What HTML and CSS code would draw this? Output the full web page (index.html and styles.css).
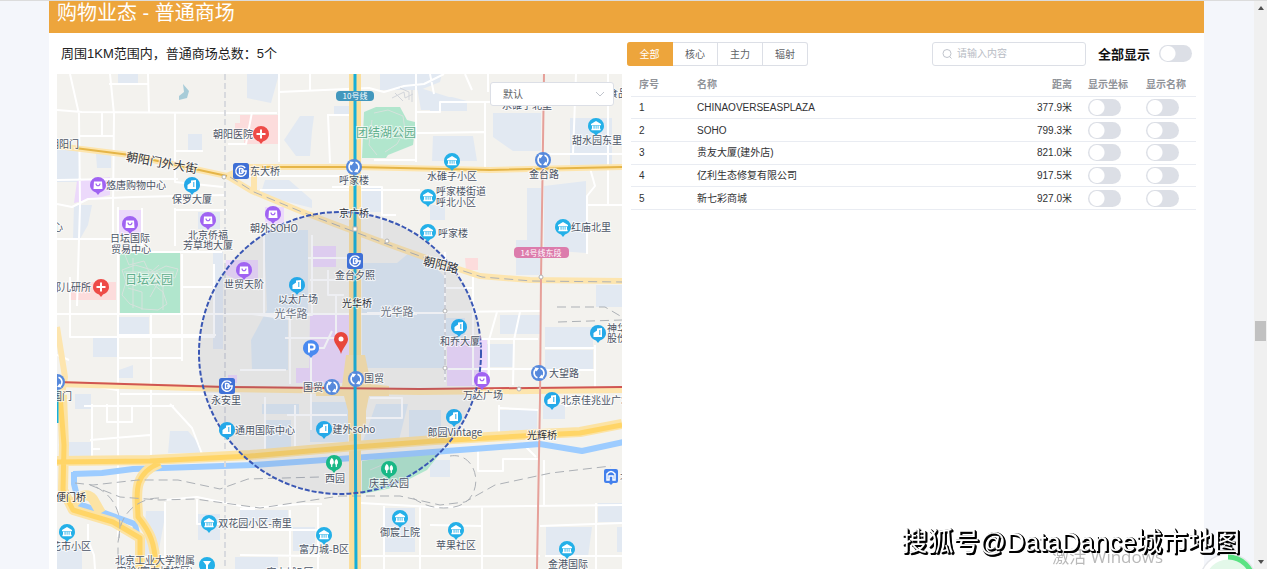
FILE: index.html
```html
<!DOCTYPE html>
<html lang="zh-CN">
<head>
<meta charset="utf-8">
<title>购物业态 - 普通商场</title>
<link rel="stylesheet" href="styles.css">
</head>
<body>
<div class="page">
<main class="card">
  <h1 class="title">购物业态 - 普通商场</h1>
  <div class="columns">
    <section class="left">
      <p class="summary">周围1KM范围内，普通商场总数：5个</p>
      <div class="map">
        <svg class="map-canvas" viewBox="57 74 565 495" preserveAspectRatio="xMidYMin slice" role="img" aria-label="周边商场地图">
          <defs>
            <g id="drop"><path d="M-8 0a8 8 0 1 1 16 0c0 4-3 6.500-6 7.500L0 10l-2-2.500C-5 6.500-8 4-8 0z"/></g>
            <g id="home"><use href="#drop" fill="#24b0e8"/><path fill="#fff" d="M0-5l5 3v1.200H-5V-2zM-4-.300h1.600V3H-4zM-1.500-.300H-.300V3h-1.200zM.500-.300h1.200V3H.500zM2.500-.300H4V3H2.500zM-4.600 2.800h9.200v1.400h-9.200z"/></g>
            <g id="tower"><use href="#drop" fill="#24a8e8"/><path fill="#fff" d="M-4.500 0L-1-2.500V4h-3.500zM-1-4.500l5-.500v9h-5z"/><path stroke="#24a8e8" d="M1.800-3v5"/></g>
            <g id="bag"><use href="#drop" fill="#a063f2"/><path fill="#fff" d="M-4-3.500h8l.500 7.500h-9z"/><path fill="none" stroke="#a063f2" stroke-width="1.200" d="M-2-1.500c.200 3 3.800 3 4 0"/></g>
            <g id="cross"><use href="#drop" fill="#ee4b48"/><path stroke="#fff" stroke-width="2" d="M-4.500 0h9M0-4.500v9"/></g>
            <g id="tree"><use href="#drop" fill="#18b886"/><path fill="#fff" d="M-2.300-5c3 2 2.500 6.500.600 6.500V4h-1.200V1.500C-4.800 1-4.500-3-2.300-5zM2.300-4c2.500 1.500 2 5.500.600 5.500V4H1.700V1.500C0 1 .500-3 2.300-4z"/></g>
            <g id="ring"><circle r="8" fill="#5689dc"/><path fill="none" stroke="#fff" stroke-width="1.600" d="M-1.500 4.700A5 5 0 0 1-3-4M1.500-4.700A5 5 0 0 1 3 4"/><path fill="#fff" d="M-4.500-5.500L0-5-2.500-1.500zM4.500 5.500L0 5l2.500-3.500z"/></g>
            <g id="metro"><rect x="-8" y="-8" width="16" height="16" rx="2.500" fill="#3f70d6"/><path fill="none" stroke="#fff" stroke-width="1.400" d="M4.200-3A5.200 5.200 0 1 0 5.200 0H0M-1.500-2.500v5H0c3 0 3-5 0-5z"/></g>
          </defs>
          <rect class="land" x="57" y="74" width="565" height="495"/>
          <path class="block" d="M118 74h20v9h-20zM188 134h14v16h-14zM96 154h15v14H97zM57 150h22v32H57zM74 205h18l-4 20-8 14H73zM198 212h22v17h-22zM119 317h30v18h-30zM93 338h24v19H93zM119 370l14-5v13h-14zM180 375h0zM170 431h18l12 14v8h-32zM67 442h25v16H67zM75 394h16v15H75zM247 74h32l-8 29-24-5zM300 116h14l-2 15-2 25h-14l-12-16zM334 106h15v9h-15zM362 188h20v24h-20zM380 74h62l-2 8-20 8h-40zM417 87l32 10v13h-28zM430 97l22 0 15 4v10h-37zM493 113h48v38h-28l-20-14zM433 136h40l4 25h-45zM570 118h42v50h-42zM527 188h14v75h-14zM544 186l42-5v72l-42-3zM430 205h15v15h-15zM516 240h25v35h-25zM596 285h26v22h-26zM545 327h48v20h-48zM545 350h48v20h-48zM480 344h34v23h-34zM500 315h40v19h-40zM146 511h20l-10 55h-14zM198 514h22v26h-22zM240 510h48v12h-48zM293 527h22v24h-22zM57 548h25v21H57zM383 508h32v44h-32zM430 460h20v17h-20zM499 410h38v24h-38zM543 405h22v14h-22zM546 527h46l-4 30h-42zM598 503h24v19h-24zM617 527h5v25h-5zM120 555h24v14h-24zM235 557h43v12h-43zM213 252h10v97h-10zM265 180l24 0 23 20 0 8-32-8-20-4z"/>
          <path class="block dense" d="M265 230h43v85h-20v55h-36l-1-30 16-30-2-50h0zM310 402h38v40h-38zM262 404h37v10h-37zM264 420h27v30h-27zM362 263h35l12-10h12l24 24v91h-83zM376 404h32l-10 40h-36zM409 410h32v28h-32zM445 318h20v20h-20z"/>
          <path class="mall" d="M77 181l33-4v18l-36 8zM118 210h24v25h-24zM265 207h19v18h-19zM226 260h32v20h-20l-14-6zM311 246h25v21h-25zM310 315h40v35l-4 33h-37zM296 368h15v15h-15zM447 340h40v46h-40zM228 375h9v8h-9z"/>
          <path class="clinic" d="M240 115h39v29h-35v-8h-9v-13h5zM80 282h36v18H70v-8h10zM465 258h13v12h-12z"/>
          <path class="park" d="M120 251h60v62h-60zM364 112l12-5h24l7 13 8 2v8l-2 15-25 10-2 3h-24zM362 461l40-6 40-4-15 19-35 18-30 6z"/>
          <path class="road" d="M70 74l9 40 1 92-3 100M110 74l4 40-1 94v45M57 110l25 2 145 1h50M148 74l1 38M109 84h40M102 112v23M79 136h34M175 112v70l48 5M175 151h28M228 144h18l6-32M279 74v88M279 92l90-4 15 4 20-6 20-2 20-10M310 74v16M327 115h22M328 115l2 48M416 74v38h24v-10h54l50-2M416 133h30M416 112v50M374 160h42M240 176h120M260 190h160M332 187h50v28h14M488 92v-18M485 103v65M430 133l54-1M576 74l-3 80M543 154h80M608 74v80M590 168l5 18-8 10v58M587 205h35M465 74l7 16M57 239h61M57 204l15 3 16-8 45-2 92-2M118 207v330M142 208v38M175 208v38M175 210h52M57 180l60-1h61M114 252h108M214 264v73H70v-60M57 314h360M182 254v107M119 358h62M118 335h98M182 287h30M151 315v140M57 380l60 10v-5M84 406h90M92 404v58M107 404v18h25v-17M118 422h14M170 404l22 24 10 26M120 394h120M264 230v85h48v-80M308 258h40M310 280h35M328 270v25h16M336 296v42M252 314l38 5v65M285 338h62M240 370h46M311 345v85M311 348h13l8-17M265 397v55M295 405v45M287 415h60M370 398h32v20h-42M367 313h80M382 238v-20M445 252v130M445 312l95-1M473 277v108M497 312l-8 28v40M520 312l-6 28-1 45M473 339h65M448 369h92M445 288h28M500 408l38 2M499 405v35M478 451v20h25v-12h35M522 443l14 14M544 460v47M545 348h49M595 345v56M545 370h50M600 400l-35 6M240 509l62-5h20M290 510v59M318 507v62M240 530h82M240 555l80 1M360 503l72 4 190-2M420 506v63M430 525l52 1v-18M482 507v62M360 556l180 0M596 503v66M540 526l82-3M545 556h77M384 506v63M88 524v16l6 15 1 14M165 502v55h-24M165 500l32-3 58 12M197 499v25h25M92 449h8M430 74l4 20M608 154v52M57 355l12 5M90 440l60-5"/>
          <path class="park-path" d="M125 255l4 10 15-4 6 13 16-8 12 3-3 9-16-3-5 10 9 7 4 12-9 6-15-1-13-5-8-9 4-13-4-12 13-5 17 5 7 11-9 16M150 273l9-8M128 288l14 4 0 18M124 272h50M133 258v50M163 280v30M374 113l14-3 15 6 2 14-8 14-12 8M372 120l-3 25 8 10M370 470l12-5 3 15M395 462l-8 22"/>
          <path class="water" d="M73 474l29-1 31-4 120-4 100-7 80-6 107-8 42 7 42-9"/>
          <path class="water" d="M74 472v12l5 20 34 12 22 8 9 45"/>
          <path class="rail-soft" d="M225 74v495M445 260v120"/>
          <g class="pale">
            <path d="M57 146l73 9 97 21 20-9h108l135 3 132-3"/>
            <path d="M227 176l25 15 48 20 90 34 50 18 40 13 50 4 92 1M254 170v23"/>
            <path d="M57 384l168 5 195 3 202-2"/>
            <path d="M57 327l8 50-5 30"/>
          </g>
          <path class="pale-wide" d="M355 74v495"/>
          <path class="pale-fill" d="M346 355h19l6 29 18 2v10h-20l-3 15v20h-18v-20l-4-15h-28v-10h26z"/>
          <path class="highway-edge" d="M62 395l2 50-1 45 10 20 40 12 27 16 0 31M57 461l93-1 100-5 105-9 80-6 105-6 40-2 42-8M160 463c-30 12-22 35-22 54 12 15 17 25 18 52M71 507c8-12 16-15 22-8l8 14"/>
          <path class="highway" d="M60 395l4 50-1 45 10 20 40 12 27 16 0 31M57 462l93-1 100-5 105-9 80-6 105-6 40-2 42-8M160 463c-30 12-22 35-22 54 12 15 17 25 18 52"/>
          <path class="rail" d="M75 483l18 2 45-5h40l42 9 28-10 72-2M90 485l30 12 40 3 35-1 65 9 80-12 60 0 40 9 25-3 30-17 56-12 60-7M96 487c20 10 28 30 22 55v27M159 498c-20 0-40 15-40 40M450 456c30-5 37 45 4 51-15 3-30-1-41-9M557 307h48l17 10M558 322l64-2"/>
          <path class="rail" d="M230 177l24 15 48 20 90 34 50 18 40 13 50 4 90 1"/>
          <path class="avenue" d="M75 148l55 7 97 21M262 167h93l135 3 132-3"/>
          <path class="red-line" d="M57 382l168 5 195 2 202-2"/>
          <path class="pink-line" d="M544 74l-3 205-1 120-3 170"/>
          <path class="blue-line" d="M355 74v290l1 205M57 390v33"/>
          <path fill="#a8ccd8" d="M183 84l6 7-2 7-8 2 0-4 5-4z"/>
          <path class="outline" d="M392 98l12-6 1 6 8-4M400 88l9 4v8M412 90v12M395 93l8 8"/>
          <circle class="radius" cx="340" cy="353" r="141"/>
          <g class="stop"><circle cx="224" cy="177" r="2"/><circle cx="541" cy="277" r="2"/><circle cx="445" cy="311" r="2"/><circle cx="445" cy="368" r="2"/><circle cx="519" cy="389" r="2"/><circle cx="387" cy="241" r="2"/><rect x="353" y="227" width="4" height="4"/></g>
          <rect x="336" y="91" width="38" height="10" rx="4" fill="#4297bd"/>
          <rect x="514" y="247" width="55" height="11" rx="4" fill="#dc7cac"/>
          <g class="line-name"><text x="355" y="99">10号线</text><text x="541" y="256">14号线东段</text></g>
          <g class="poi">
            <text x="233" y="138">朝阳医院</text><text x="64" y="148">朝阳门</text><text x="136" y="189">悠唐购物中心</text><text x="192" y="203">保罗大厦</text>
            <text x="130" y="242">日坛国际</text><text x="131" y="253">贸易中心</text><text x="208" y="239">北京侨福</text><text x="208" y="249">芳草地大厦</text>
            <text x="274" y="232">朝外SOHO</text><text x="265" y="175">东大桥</text><text x="354" y="184">呼家楼</text><text x="452" y="180">水碓子小区</text>
            <text x="461" y="195">呼家楼街道</text><text x="456" y="206">呼北小区</text><text x="453" y="237">呼家楼</text><text x="544" y="178">金台路</text>
            <text x="527" y="109">水碓子北里</text><text x="597" y="144">甜水园东里</text><text x="591" y="231">红庙北里</text><text x="618" y="97">食品</text>
            <text x="355" y="279">金台夕照</text><text x="244" y="288">世贸天阶</text><text x="298" y="303">以太广场</text><text x="71" y="291">都儿研所</text>
            <text x="460" y="345">和乔大厦</text><text x="617" y="332">神华</text><text x="617" y="342">股份</text><text x="564" y="377">大望路</text><text x="374" y="382">国贸</text><text x="313" y="391">国贸</text>
            <text x="483" y="399">万达广场</text><text x="596" y="404">北京佳兆业广场</text><text x="226" y="404">永安里</text><text x="57" y="400">建国门</text><text x="265" y="434">通用国际中心</text>
            <text x="354" y="433">建外soho</text><text x="455" y="436">郎园Vintage</text><text x="335" y="482">西园</text><text x="389" y="487">庆丰公园</text>
            <text x="255" y="527">双花园小区-南里</text><text x="324" y="553">富力城-B区</text><text x="400" y="536">御宸上院</text><text x="456" y="549">苹果社区</text><text x="568" y="568">金港国际</text>
            <text x="71" y="550">花市小区</text><text x="155" y="564">北京工业大学附属</text><text x="155" y="575">实验(富力城校区)</text><text x="630" y="480">北京</text><text x="290" y="576">富力城D区</text><text x="53" y="231">中心</text>
          </g>
          <g>
            <use href="#home" x="596" y="126"/><use href="#home" x="452" y="161"/><use href="#home" x="428" y="197"/><use href="#home" x="428" y="232"/><use href="#home" x="563" y="227"/><use href="#home" x="67" y="532"/><use href="#home" x="209" y="523"/><use href="#home" x="324" y="535"/><use href="#home" x="400" y="518"/><use href="#home" x="456" y="530"/><use href="#home" x="567" y="549"/>
            <use href="#tower" x="192" y="185"/><use href="#tower" x="297" y="285"/><use href="#tower" x="459" y="327"/><use href="#tower" x="598" y="333"/><use href="#tower" x="552" y="400"/><use href="#tower" x="227" y="430"/><use href="#tower" x="324" y="429"/><use href="#tower" x="454" y="417"/>
            <use href="#bag" x="98" y="185"/><use href="#bag" x="130" y="224"/><use href="#bag" x="208" y="220"/><use href="#bag" x="273" y="214"/><use href="#bag" x="244" y="270"/><use href="#bag" x="482" y="380"/>
            <use href="#cross" x="261" y="134"/><use href="#cross" x="101" y="287"/>
            <use href="#tree" x="334" y="463"/><use href="#tree" x="389" y="469"/>
            <use href="#ring" x="354" y="167"/><use href="#ring" x="543" y="160"/><use href="#ring" x="332" y="387"/><use href="#ring" x="356" y="379"/><use href="#ring" x="539" y="373"/><use href="#ring" x="57" y="382"/>
            <use href="#metro" x="241" y="171"/><use href="#metro" x="355" y="261"/><use href="#metro" x="227" y="386"/>
            <g transform="translate(207 565)"><use href="#drop" fill="#24b0e8"/><path fill="#fff" d="M-4-4h8L1 0v4h-2V0z"/></g>
            <g transform="translate(311 348)"><use href="#drop" fill="#4a8af0"/><path fill="none" stroke="#fff" stroke-width="2" d="M-2 4.500v-8H1c3.500 0 3.500 5 0 5h-3"/></g>
            <g transform="translate(611 476)"><path fill="#4380ec" d="M-5-7H5q2 0 2 2V5q0 2-2 2H2L0 9-2 7h-3q-2 0-2-2V-5q0-2 2-2z"/><path fill="none" stroke="#fff" stroke-width="1.500" d="M-4 4v-6q4-5 8 0v6H2V0h-4v4z"/></g>
            <g transform="translate(341 341)"><path fill="#e8463c" d="M0 13C-2 6-7 3-7-2a7 7 0 0 1 14 0c0 5-5 8-7 15z"/><circle cy="-2" r="2.500" fill="#fff"/></g>
          </g>
          <g class="area"><text x="291" y="318">光华路</text><text x="397" y="316">光华路</text></g>
          <g class="bridge"><text x="354" y="217">京广桥</text><text x="357" y="307">光华桥</text><text x="542" y="439">光辉桥</text><text x="66" y="501">东便门桥</text></g>
          <g class="street"><text transform="translate(161 167) rotate(10)">朝阳门外大街</text><text transform="translate(440 269) rotate(14)">朝阳路</text></g>
          <g class="park-name"><text x="386" y="137">团结湖公园</text><text x="149" y="284">日坛公园</text></g>
        </svg>
        <div class="map-select">
          <select aria-label="地图样式"><option>默认</option></select>
          <svg viewBox="0 0 10 6" aria-hidden="true"><path d="M1 1l4 4 4-4"/></svg>
        </div>
      </div>
    </section>
    <section class="right">
      <div class="toolbar">
        <div class="tabs">
          <button type="button" class="tab active">全部</button><button type="button" class="tab">核心</button><button type="button" class="tab">主力</button><button type="button" class="tab">辐射</button>
        </div>
        <label class="search">
          <svg viewBox="0 0 12 12" aria-hidden="true"><circle cx="6" cy="5.500" r="4"/><path d="M8.500 8.500l2 2"/></svg>
          <input type="text" placeholder="请输入内容" aria-label="搜索">
        </label>
        <label class="show-all">全部显示<input type="checkbox" class="switch"></label>
      </div>
      <table class="list">
        <thead><tr><th class="no">序号</th><th>名称</th><th class="distance">距离</th><th class="toggle">显示坐标</th><th class="toggle">显示名称</th></tr></thead>
        <tbody>
          <tr><td>1</td><td>CHINAOVERSEASPLAZA</td><td class="distance">377.9米</td><td class="toggle"><input type="checkbox" class="switch" aria-label="显示坐标 1"></td><td class="toggle"><input type="checkbox" class="switch" aria-label="显示名称 1"></td></tr>
          <tr><td>2</td><td>SOHO</td><td class="distance">799.3米</td><td class="toggle"><input type="checkbox" class="switch" aria-label="显示坐标 2"></td><td class="toggle"><input type="checkbox" class="switch" aria-label="显示名称 2"></td></tr>
          <tr><td>3</td><td>贵友大厦(建外店)</td><td class="distance">821.0米</td><td class="toggle"><input type="checkbox" class="switch" aria-label="显示坐标 3"></td><td class="toggle"><input type="checkbox" class="switch" aria-label="显示名称 3"></td></tr>
          <tr><td>4</td><td>亿利生态修复有限公司</td><td class="distance">917.5米</td><td class="toggle"><input type="checkbox" class="switch" aria-label="显示坐标 4"></td><td class="toggle"><input type="checkbox" class="switch" aria-label="显示名称 4"></td></tr>
          <tr><td>5</td><td>新七彩商城</td><td class="distance">927.0米</td><td class="toggle"><input type="checkbox" class="switch" aria-label="显示坐标 5"></td><td class="toggle"><input type="checkbox" class="switch" aria-label="显示名称 5"></td></tr>
        </tbody>
      </table>
    </section>
  </div>
</main>
<div class="scrollbar" aria-hidden="true">
  <svg viewBox="0 0 6 4"><path d="M0 4l3-4 3 4z"/></svg>
  <span class="thumb"></span>
  <svg viewBox="0 0 6 4"><path d="M0 0l3 4 3-4z"/></svg>
</div>
</div>
<div class="activate">激活 Windows</div>
<svg class="gauge" viewBox="0 0 60 16" aria-hidden="true"><circle cx="30" cy="29" r="29" fill="#e4e6ea"/><circle cx="30" cy="29" r="25" fill="#e3f8e9" stroke="#fff" stroke-width="5"/><path d="M30 4a25 25 0 0 1 25 25" fill="none" stroke="#5ae383" stroke-width="5"/></svg>
<div class="watermark">搜狐号@DataDance城市地图</div>
</body>
</html>
```
FILE: styles.css
```css
* { box-sizing: border-box; }

body {
  margin: 0;
  height: 100vh;
  overflow: hidden;
  background: #f4f6fb;
  color: #303133;
  font-family: "Liberation Sans", "Noto Sans CJK SC", sans-serif;
  font-size: 10px;
}

.page { display: flex; height: 100%; border-top: 1px solid #dcdcdc; }

.card {
  flex: 1;
  display: flex;
  flex-direction: column;
  margin: 0 50px 0 49px;
  background: #fff;
}

.title {
  margin: 0;
  height: 32px;
  padding: 0 8px;
  background: #eda53c;
  color: #fff;
  font-size: 20px;
  font-weight: 400;
  line-height: 24px;
}

.columns {
  flex: 1;
  display: grid;
  grid-template-columns: 565fr 569fr;
  gap: 5px;
  padding: 0 8px;
  min-height: 0;
}

.left { display: flex; flex-direction: column; min-height: 0; }
.summary { margin: 0; padding: 0 4px; color: #222; font-size: 13px; line-height: 41px; height: 41px; }
.map { position: relative; flex: 1; min-height: 0; overflow: hidden; }
.map-canvas { display: block; width: 100%; height: 100%; font-family: "Noto Sans CJK SC", sans-serif; }

.map-select { position: absolute; top: 8px; right: 8px; width: 124px; }
.map-select select {
  appearance: none;
  display: block;
  width: 100%;
  height: 24px;
  padding: 0 12px;
  border: 1px solid #dcdfe6;
  border-radius: 3px;
  background: #fff;
  color: #606266;
  font: inherit;
}
.map-select svg { position: absolute; right: 9px; top: 9px; width: 10px; height: 6px; fill: none; stroke: #c0c4cc; pointer-events: none; }

.land { fill: #f3f2ee; }
.block { fill: #e2e9f2; }
.dense { fill: #dee9f3; }
.mall { fill: #ecd9fb; }
.clinic { fill: #fcdcdc; }
.park { fill: #b1e6cd; }
.road { fill: none; stroke: #fff; stroke-width: 2; stroke-linejoin: round; }
.park-path { fill: none; stroke: #d5e2dc; stroke-width: 1; }
.water { fill: none; stroke: #9dccff; stroke-width: 6; stroke-linejoin: round; }
.rail-soft { fill: none; stroke: #d8dade; stroke-width: 2; stroke-dasharray: 6 3; }
.rail { fill: none; stroke: #adb1b6; stroke-width: 1; stroke-dasharray: 9 5; }
.pale { fill: none; stroke: #fde5ae; stroke-width: 6; }
.pale-wide { fill: none; stroke: #fbdf9d; stroke-width: 12; }
.pale-fill { fill: #fbe3ac; }
.avenue { fill: none; stroke: #e5b548; stroke-width: 2; }
.highway-edge { fill: none; stroke: #fce3a4; stroke-width: 10; stroke-linejoin: round; }
.highway { fill: none; stroke: #ffd567; stroke-width: 5; stroke-linejoin: round; }
.red-line { fill: none; stroke: #d05652; stroke-width: 2; }
.pink-line { fill: none; stroke: #e6a099; stroke-width: 2; }
.blue-line { fill: none; stroke: #16afd9; stroke-width: 3; }
.outline { fill: none; stroke: #d2d5da; stroke-width: 1; }
.radius { fill: #5a648c; fill-opacity: .1; stroke: #3a57b4; stroke-width: 2; stroke-dasharray: 5 2; }
.stop { fill: #fff; stroke: #b4b4b4; stroke-width: 1; }

.poi, .area, .bridge, .street, .park-name, .line-name { text-anchor: middle; paint-order: stroke; stroke: #fff; stroke-opacity: .7; stroke-width: 2; }
.poi { fill: #4c5566; font-size: 10px; }
.area { fill: #6b7280; font-size: 11px; }
.bridge { fill: #2e323a; font-size: 10px; }
.street { fill: #30343c; font-size: 12px; }
.park-name { fill: #5fae8c; font-size: 12px; }
.line-name { fill: #fff; stroke: none; font-size: 8px; }

.toolbar { display: flex; align-items: center; height: 41px; padding-right: 4px; }
.tabs { display: flex; margin-right: auto; }
.tab {
  width: 45px;
  height: 24px;
  padding: 0;
  border: 1px solid #dcdfe6;
  border-left-width: 0;
  background: #fff;
  color: #606266;
  font: inherit;
}
.tab:last-child { border-radius: 0 3px 3px 0; }
.tab.active { width: 46px; border-color: #eda53c; border-radius: 3px 0 0 3px; background: #eda53c; color: #fff; }

.search {
  display: flex;
  align-items: center;
  gap: 4px;
  width: 154px;
  height: 24px;
  padding: 0 8px;
  border: 1px solid #dcdfe6;
  border-radius: 3px;
}
.search svg { flex: none; width: 12px; height: 12px; fill: none; stroke: #c0c4cc; }
.search input { flex: 1; min-width: 0; padding: 0; border: 0; outline: 0; background: none; font: inherit; }
.search input::placeholder { color: #b8bcc4; }

.show-all { display: flex; align-items: center; gap: 9px; margin-left: 12px; color: #111; font-size: 13px; font-weight: 700; }

.switch {
  appearance: none;
  display: block;
  width: 33px;
  height: 17px;
  margin: 0;
  border-radius: 9px;
  background: radial-gradient(circle at 9px 50%, #fff 7px, #dcdfe6 8px);
}
.switch:checked { background: radial-gradient(circle at 24px 50%, #fff 7px, #eda53c 8px); }

.list { width: calc(100% - 4px); height: 136px; margin-left: 4px; border-collapse: collapse; table-layout: fixed; }
.list th, .list td { height: 22px; padding: 0 8px; border-bottom: 1px solid #e9ecf2; text-align: left; line-height: 15px; white-space: nowrap; }
.list th { color: #909399; font-weight: 700; }
.list .no { width: 58px; }
.list .distance { width: 75px; text-align: right; }
.list .toggle { width: 58px; }

.scrollbar { display: flex; flex-direction: column; align-items: center; width: 13px; padding: 5px 0; background: #f0f0f0; }
.scrollbar svg { width: 6px; height: 4px; fill: #505050; }
.thumb { width: 11px; height: 20px; background: #c1c1c1; }
.scrollbar .thumb { margin: calc(56vh - 8px) 0 auto; }

.activate { position: fixed; right: 104px; bottom: 0; color: #b9b9b9; font-family: "Open Sans", "Noto Sans CJK SC", sans-serif; font-size: 17px; line-height: 24px; }
.gauge { position: fixed; right: 9px; bottom: 0; width: 60px; height: 16px; }
.watermark { position: fixed; right: 27px; bottom: 9px; color: #fff; font-size: 26px; line-height: 36px; text-shadow: 1px 0 #000, 2px 1px #000, 1px 2px #000, 2px 2px #000; }
```
